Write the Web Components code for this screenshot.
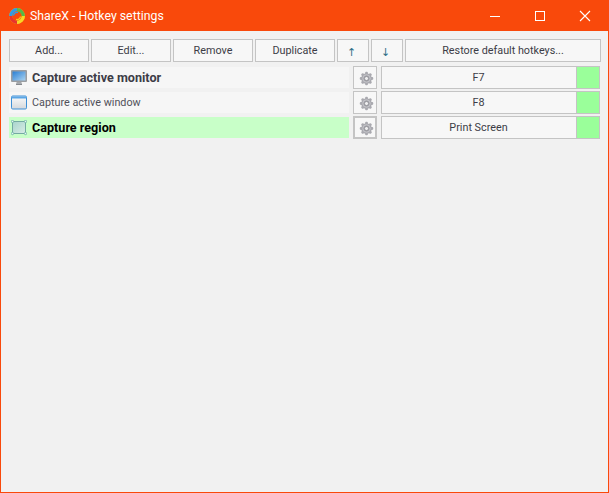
<!DOCTYPE html>
<html>
<head>
<meta charset="utf-8">
<title>ShareX - Hotkey settings</title>
<style>
  html, body { margin: 0; height: 100%; background: #f1f1f1; }
  body { font: 10.8px Roboto, sans-serif; color: #3c3c46; }
</style>
</head>
<body>
<hotkey-window>
  <tool-bar></tool-bar>
  <hotkey-row name="Capture active monitor" keys="F7" icon="monitor" weight="bold"></hotkey-row>
  <hotkey-row name="Capture active window" keys="F8" icon="window"></hotkey-row>
  <hotkey-row name="Capture region" keys="Print Screen" icon="region" weight="bold" selected></hotkey-row>
</hotkey-window>

<script>
const windowTemplate = document.createElement('template')
windowTemplate.innerHTML = `
<style>
  :host {
    display: flex;
    flex-direction: column;
    box-sizing: border-box;
    width: 609px;
    height: 493px;
    border: solid #f9490b;
    border-width: 0 1px 1px 1px;
    background: #f1f1f1;
  }
  header {
    display: flex;
    align-items: center;
    height: 31px;
    margin-left: -1px;
    padding-right: 1px;
    background: #f9490b;
    color: #fff;
    font-size: 12.3px;
  }
  header .logo { margin: 0 5px 0 9px; }
  header .title { flex: 1; }
  header .ctl { width: 45px; height: 31px; display: flex; align-items: center; justify-content: center; }
  main {
    display: flex;
    flex-direction: column;
    gap: 2px;
    padding: 8px 7px 0 8px;
  }
</style>
<header>
  <svg class="logo" width="16" height="16" viewBox="0 0 16 16" fill="none" stroke-width="3.400">
    <circle cx="8" cy="8" r="6.200" stroke="#f6c21c"/>
    <path d="M1.800 8A6.200 6.200 0 0 1 8 1.800" stroke="#2f9be6"/>
    <path d="M8 1.800A6.200 6.200 0 0 1 14.200 8" stroke="#57b947"/>
    <path d="M14.200 8A6.200 6.200 0 0 1 8 14.200" stroke="#f8d626"/>
    <path d="M8 14.200A6.200 6.200 0 0 1 1.800 8" stroke="#e8352c"/>
    <circle cx="8" cy="8" r="4.500" fill="#f9490b" stroke="none"/>
    <path d="M4.500 7.500A3.500 3.500 0 0 1 9 4.500" stroke="#2f9be6" stroke-width="1.400"/>
    <path d="M11.500 8.500A3.500 3.500 0 0 1 7 11.500" stroke="#f6c21c" stroke-width="1.400"/>
  </svg>
  <span class="title">ShareX - Hotkey settings</span>
  <span class="ctl"><svg width="12" height="12" viewBox="0 0 12 12"><path d="M1 6.500h10" stroke="#fff"/></svg></span>
  <span class="ctl"><svg width="12" height="12" viewBox="0 0 12 12"><rect x="1.500" y="1.500" width="9" height="9" fill="none" stroke="#fff"/></svg></span>
  <span class="ctl"><svg width="12" height="12" viewBox="0 0 12 12"><path d="M1 1l10 10M11 1L1 11" stroke="#fff" stroke-width="1.100"/></svg></span>
</header>
<main><slot></slot></main>
`
customElements.define('hotkey-window', class extends HTMLElement {
  constructor () {
    super()
    this.attachShadow({ mode: 'open' }).appendChild(windowTemplate.content.cloneNode(true))
  }
})

const buttonTemplate = document.createElement('template')
buttonTemplate.innerHTML = `
<style>
  :host { display: block; }
  button {
    display: flex;
    align-items: center;
    justify-content: center;
    box-sizing: border-box;
    width: 100%;
    height: 100%;
    padding: 0;
    border: 1px solid #c4c4c4;
    background: #f7f7f7;
    color: #3c3c46;
    font: inherit;
  }
  :host([focused]) button { border-width: 2px; }
  :host([indent]) button { padding-right: 24px; }
</style>
<button><slot></slot></button>
`
customElements.define('flat-button', class extends HTMLElement {
  constructor () {
    super()
    this.attachShadow({ mode: 'open' }).appendChild(buttonTemplate.content.cloneNode(true))
  }
})

const toolbarTemplate = document.createElement('template')
toolbarTemplate.innerHTML = `
<style>
  :host {
    display: grid;
    grid-template-columns: 80px 80px 80px 80px 32px 32px 196px;
    grid-auto-rows: 23px;
    gap: 2px;
    margin-bottom: 2px;
  }
  .arrow { font-family: "DejaVu Sans", sans-serif; color: #2f6f86; font-size: 11px; margin: 3px 3px 0 0; }
</style>
<flat-button>Add...</flat-button>
<flat-button>Edit...</flat-button>
<flat-button>Remove</flat-button>
<flat-button>Duplicate</flat-button>
<flat-button><span class="arrow">↑</span></flat-button>
<flat-button><span class="arrow">↓</span></flat-button>
<flat-button>Restore default hotkeys...</flat-button>
`
customElements.define('tool-bar', class extends HTMLElement {
  constructor () {
    super()
    this.attachShadow({ mode: 'open' }).appendChild(toolbarTemplate.content.cloneNode(true))
  }
})

const icons = {
  monitor: `<defs><linearGradient id="b" x1="0" y1="0" x2="1" y2="1"><stop offset="0" stop-color="#2a7fd4"/><stop offset="1" stop-color="#a9d2f0"/></linearGradient></defs>
    <rect x="0" y="0" width="16" height="12" rx="1" fill="#9a9da1"/><rect x="1.500" y="1.500" width="13" height="9" fill="url(#b)"/><path d="M5.500 12h5v1.500h-5z" fill="#a4a7ab"/><path d="M5 13.500h6V15H5z" fill="#85898e"/>`,
  window: `<defs><linearGradient id="w" x1="0" y1="0" x2="0" y2="1"><stop offset="0" stop-color="#fbfbfb"/><stop offset="1" stop-color="#d4d8dc"/></linearGradient></defs>
    <rect x="0.500" y="1" width="15" height="13" rx="1.200" fill="url(#w)" stroke="#3d8fd6"/><rect x="1" y="1.500" width="14" height="2" fill="#5ba6e6"/>`,
  region: `<defs><linearGradient id="r" x1="0" y1="0" x2="1" y2="1"><stop offset="0" stop-color="#a8d4cc"/><stop offset="1" stop-color="#d8ece6"/></linearGradient></defs>
    <rect x="1.500" y="1.500" width="13" height="12" fill="url(#r)" stroke="#74aaa2"/>
    <g fill="#eaf7f3" stroke="#5aa79c" stroke-width=".7"><circle cx="1.500" cy="1.500" r="1.200"/><circle cx="14.500" cy="1.500" r="1.200"/><circle cx="1.500" cy="13.500" r="1.200"/><circle cx="14.500" cy="13.500" r="1.200"/></g>`
}

const rowTemplate = document.createElement('template')
rowTemplate.innerHTML = `
<style>
  :host {
    display: grid;
    grid-template-columns: 340px 24px 219px;
    gap: 4px;
    height: 23px;
  }
  .name {
    display: flex;
    align-items: center;
    gap: 5px;
    padding: 0 0 0 2px;
    margin: 1px 0;
    background: #f6f6f6;
    color: #50505a;
  }
  :host([weight="bold"]) .name { font-weight: 700; font-size: 12.6px; color: #3c3c46; }
  :host([selected]) .name { background: #c8ffc8; color: #000; }
  .key { position: relative; display: block; }
  .key .ok {
    position: absolute;
    top: 1px;
    right: 1px;
    bottom: 1px;
    width: 22px;
    background: #9aff9a;
    border-left: 1px solid #c4c4c4;
  }
  flat-button { height: 100%; }
  .gear svg { display: block; margin: 1px 0 0 2px; }
</style>
<div class="name"><svg width="16" height="16" viewBox="0 0 16 16"></svg><span></span></div>
<flat-button class="gear">
  <svg width="15" height="15" viewBox="0 0 16 16">
    <g fill="#a9a9af">
      <circle cx="8" cy="8" r="5.600"/>
      <rect x="6.500" y="0.800" width="3" height="14.400" rx="1.200"/>
      <rect x="6.500" y="0.800" width="3" height="14.400" rx="1.200" transform="rotate(45 8 8)"/>
      <rect x="6.500" y="0.800" width="3" height="14.400" rx="1.200" transform="rotate(90 8 8)"/>
      <rect x="6.500" y="0.800" width="3" height="14.400" rx="1.200" transform="rotate(135 8 8)"/>
    </g>
    <circle cx="8" cy="8" r="4" fill="none" stroke="#c6c6cb"/>
    <circle cx="8" cy="8" r="2.200" fill="#eeeeef" stroke="#85858c" stroke-width=".8"/>
  </svg>
</flat-button>
<div class="key"><flat-button class="keys" indent></flat-button><div class="ok"></div></div>
`
customElements.define('hotkey-row', class extends HTMLElement {
  constructor () {
    super()
    const root = this.attachShadow({ mode: 'open' })
    root.appendChild(rowTemplate.content.cloneNode(true))
    root.querySelector('.name svg').innerHTML = icons[this.getAttribute('icon')]
    root.querySelector('.name span').textContent = this.getAttribute('name')
    root.querySelector('.keys').textContent = this.getAttribute('keys')
    if (this.hasAttribute('selected')) root.querySelector('.gear').setAttribute('focused', '')
  }
})
</script>
</body>
</html>
